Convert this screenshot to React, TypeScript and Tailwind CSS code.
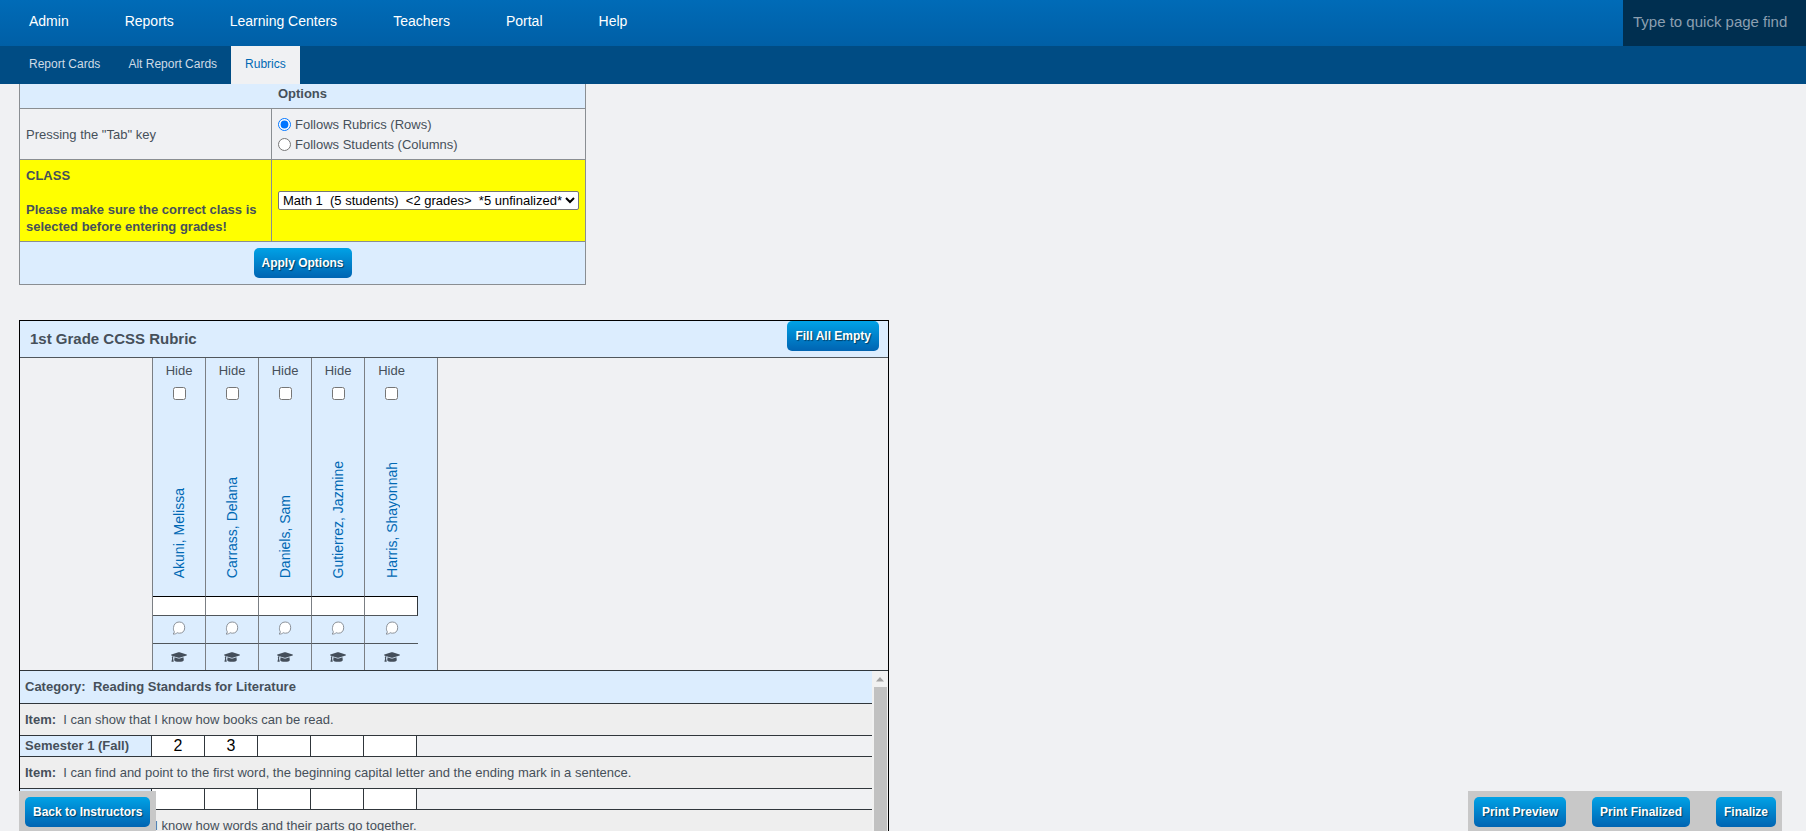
import type { ReactNode } from "react";
import { FaGraduationCap } from "react-icons/fa";

const menu = ["Admin", "Reports", "Learning Centers", "Teachers", "Portal", "Help"];
const subMenu = ["Report Cards", "Alt Report Cards", "Rubrics"];

const students = [
  "Akuni, Melissa",
  "Carrass, Delana",
  "Daniels, Sam",
  "Gutierrez, Jazmine",
  "Harris, Shayonnah",
];

const items = [
  { text: "I can show that I know how books can be read.", grades: ["2", "3", "", "", ""] },
  {
    text: "I can find and point to the first word, the beginning capital letter and the ending mark in a sentence.",
    grades: ["", "", "", "", ""],
  },
  { text: "I can show that I know how words and their parts go together.", grades: ["", "", "", "", ""] },
];

function BlueButton({ children }: { children: ReactNode }) {
  return (
    <button
      type="button"
      className="h-[30px] px-2 rounded-[5px] bg-linear-to-b from-[#00a2e6] to-[#0064b2] text-white text-[12px] leading-4 font-bold whitespace-nowrap text-shadow-[1px_1px_1px_rgba(0,0,0,0.5)]"
    >
      {children}
    </button>
  );
}

function CommentIcon() {
  return (
    <svg width="14" height="14" viewBox="0 0 14 14" className="mx-auto block">
      <path
        d="M1 13c.9-.5 1.300-1.200 1.300-2.300C1.500 9.500 1.300 8.200 1.500 6.600 1.800 3.200 3.900 1 7.200 1c3.600 0 5.500 2.200 5.500 5.700 0 3.500-2.100 5.500-5.200 5.500-1 0-1.600-.2-2.300-.5-1 1-2.400 1.500-4.200 1.300z"
        fill="#fff"
        stroke="#8b9199"
        strokeWidth="1"
      />
    </svg>
  );
}

function Header() {
  return (
    <header className="relative z-10 shrink-0">
      <div className="flex h-[46px] bg-linear-to-b from-[#006bb7] to-[#005fa6]">
        <nav className="flex flex-1 items-center gap-14 pl-[29px] pb-[3px] text-[14px] text-white">
          {menu.map((m) => (
            <a key={m} href="#">
              {m}
            </a>
          ))}
        </nav>
        <input
          type="text"
          aria-label="Quick page find"
          placeholder="Type to quick page find"
          className="w-[183px] bg-[#002f50] px-[10px] pb-[2px] text-[15px] placeholder:text-[#8c9fb0] text-white outline-none"
        />
      </div>
      <nav className="flex h-[38px] bg-[#004c84] pl-[15px] text-[12px] text-[#cfdbe6]">
        {subMenu.map((m) => (
          <a
            key={m}
            href="#"
            className={
              m === "Rubrics"
                ? "flex items-center bg-[#f0f1f3] px-[14px] pb-[2px] text-[#0069b4]"
                : "flex items-center px-[14px] pb-[2px]"
            }
          >
            {m}
          </a>
        ))}
      </nav>
    </header>
  );
}

function OptionsTable() {
  return (
    <table className="w-[567px] table-fixed border-separate border-spacing-0 border-x border-[#8a8e92] text-[13px] leading-[17px]">
      <colgroup>
        <col className="w-[252px]" />
        <col />
      </colgroup>
      <thead>
        <tr>
          <th colSpan={2} className="h-[25px] border-b border-[#8a8e92] bg-[#dcedfe] p-0 pb-[6px] font-bold">
            Options
          </th>
        </tr>
      </thead>
      <tbody>
        <tr className="h-[51px]">
          <td className="border-b border-r border-[#8a8e92] px-[6px]">Pressing the "Tab" key</td>
          <td className="border-b border-[#8a8e92] px-[6px]">
            <label className="flex h-5 items-center gap-1">
              <input type="radio" name="tab" defaultChecked className="size-[13px]" />
              Follows Rubrics (Rows)
            </label>
            <label className="flex h-5 items-center gap-1">
              <input type="radio" name="tab" className="size-[13px]" />
              Follows Students (Columns)
            </label>
          </td>
        </tr>
        <tr className="h-[82px] bg-[#ffff00]">
          <td className="border-b border-r border-[#8a8e92] px-[6px] font-bold">
            <label htmlFor="class">
              CLASS
              <br />
              <br />
              Please make sure the correct class is selected before entering grades!
            </label>
          </td>
          <td className="border-b border-[#8a8e92] px-[6px]">
            <select
              id="class"
              className="block h-[19px] w-full rounded-[2px] border border-[#767676] bg-white text-[13px] leading-4 text-black"
            >
              <option>{"Math 1 \u00a0(5 students) \u00a0<2 grades> \u00a0*5 unfinalized*"}</option>
            </select>
          </td>
        </tr>
        <tr>
          <td colSpan={2} className="h-[43px] border-b border-[#8a8e92] bg-[#dcedfe] p-0 text-center">
            <BlueButton>Apply Options</BlueButton>
          </td>
        </tr>
      </tbody>
    </table>
  );
}

function StudentHeader() {
  return (
    <div className="flex border-b border-[#30363b]">
      <div className="w-[132px]" />
      <div className="border-x border-[#7b7f84] bg-[#dcedfe] pr-[19px]">
        <table className="w-[265px] table-fixed border-separate border-spacing-0 text-[13px] leading-[18px]">
          <thead>
            <tr>
              {students.map((s) => (
                <th key={s} className="h-[45px] border-r border-[#7b7f84] p-0 pt-1 align-top font-normal last:border-0">
                  <label className="flex flex-col items-center gap-[7px]">
                    Hide
                    <input type="checkbox" className="size-[13px]" />
                  </label>
                </th>
              ))}
            </tr>
            <tr>
              {students.map((s) => (
                <th
                  key={s}
                  className="h-[193px] border-r border-[#7b7f84] p-0 pb-[18px] align-bottom font-normal last:border-0"
                >
                  <div className="flex justify-center">
                    <a
                      href="#"
                      className="rotate-180 text-[14px] leading-[18px] text-[#0069b4] [writing-mode:vertical-rl]"
                    >
                      {s}
                    </a>
                  </div>
                </th>
              ))}
            </tr>
          </thead>
          <tbody>
            <tr>
              {students.map((s) => (
                <td
                  key={s}
                  className="h-5 border-y border-r border-t-black border-r-[#7b7f84] border-b-[#50565b] bg-white p-0 last:border-r-[#30363b]"
                >
                  <input aria-label={"Fill " + s} className="block h-[18px] w-full text-center outline-none" />
                </td>
              ))}
            </tr>
            <tr>
              {students.map((s) => (
                <td
                  key={s}
                  className="h-[28px] border-b border-r border-b-[#50565b] border-r-[#7b7f84] p-0 pb-1 last:border-r-0"
                >
                  <button type="button" aria-label={"Comment for " + s} className="block w-full">
                    <CommentIcon />
                  </button>
                </td>
              ))}
            </tr>
            <tr>
              {students.map((s) => (
                <td key={s} className="h-[26px] border-r border-[#7b7f84] p-0 last:border-0">
                  <button type="button" aria-label={"Grades for " + s} className="block w-full">
                    <FaGraduationCap className="mx-auto size-4 text-[#444e5a]" />
                  </button>
                </td>
              ))}
            </tr>
          </tbody>
        </table>
      </div>
    </div>
  );
}

function GradeRows({ text, grades }: { text: string; grades: string[] }) {
  return (
    <>
      <tr>
        <td colSpan={7} className="h-8 border-b border-[#30363b] bg-[#eeeeee] p-0 px-[5px]">
          <b>Item:</b>&nbsp; {text}
        </td>
      </tr>
      <tr>
        <th className="h-[21px] border-r border-b border-[#30363b] bg-[#dcedfe] p-0 px-[5px] text-left font-bold">
          Semester 1 (Fall)
        </th>
        {grades.map((g, i) => (
          <td key={i} className="border-r border-b border-[#30363b] bg-white p-0">
            <input
              aria-label={students[i]}
              defaultValue={g}
              className="block h-5 w-full text-center text-[16px] text-black outline-none"
            />
          </td>
        ))}
        <td className="border-b border-[#30363b] p-0" />
      </tr>
    </>
  );
}

function RubricPanel() {
  return (
    <section className="w-[870px] border border-black">
      <div className="flex h-[37px] items-start justify-between border-b border-[#50565b] bg-[#dcedfe] pr-[9px] pl-[10px]">
        <h2 className="self-center text-[15px] leading-5 font-bold">1st Grade CCSS Rubric</h2>
        <BlueButton>Fill All Empty</BlueButton>
      </div>
      <StudentHeader />
      <div className="flex">
        <table className="flex-1 table-fixed border-separate border-spacing-0 text-[13px] leading-[18px]">
          <colgroup>
            <col className="w-[132px]" />
            {students.map((s) => (
              <col key={s} className="w-[53px]" />
            ))}
            <col />
          </colgroup>
          <tbody>
            <tr>
              <th
                colSpan={7}
                className="h-[33px] border-b border-[#30363b] bg-[#dcedfe] p-0 px-[5px] text-left font-bold"
              >
                Category:&nbsp; Reading Standards for Literature
              </th>
            </tr>
            {items.map((item) => (
              <GradeRows key={item.text} text={item.text} grades={item.grades} />
            ))}
          </tbody>
        </table>
        {/* Scroll bar */}
        <div className="flex w-4 flex-col items-center bg-[#f1f1f1]">
          <svg width="8" height="16" viewBox="0 0 8 16">
            <path d="M0 10.500L4 6l4 4.500z" fill="#a3a3a3" />
          </svg>
          <div className="w-[13px] flex-1 bg-[#c1c1c1]" />
        </div>
      </div>
    </section>
  );
}

export default function App() {
  return (
    <div className="flex h-screen flex-col overflow-hidden bg-[#f0f1f3] font-['Liberation_Sans',Arial,sans-serif] text-[#46505a]">
      <Header />
      <main className="flex flex-col items-start gap-[35px] pl-[19px]">
        <OptionsTable />
        <RubricPanel />
      </main>

      {/* Floating action bars */}
      <div className="fixed bottom-0 left-[19px] z-20 bg-[#c8c8c8] px-[6px] pt-[6px] pb-1">
        <BlueButton>Back to Instructors</BlueButton>
      </div>
      <div className="fixed right-6 bottom-0 z-20 flex gap-[26px] bg-[#c8c8c8] px-[6px] pt-[6px] pb-1">
        <BlueButton>Print Preview</BlueButton>
        <BlueButton>Print Finalized</BlueButton>
        <BlueButton>Finalize</BlueButton>
      </div>
    </div>
  );
}
